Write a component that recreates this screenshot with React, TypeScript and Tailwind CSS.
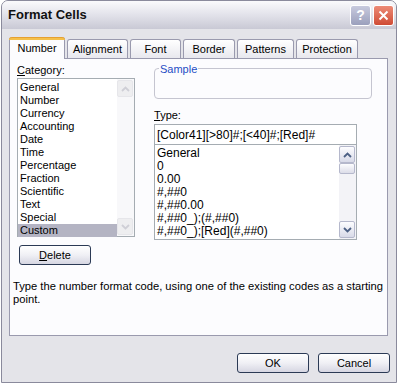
import React from "react";

const F = { fontFamily: '"Liberation Sans", Arial, sans-serif' };

function Tab({ label, w, selected }: { label: string; w: number; selected?: boolean }) {
  if (selected) {
    return (
      <div
        className="relative z-10 -mb-[1px] flex h-[22px] items-center justify-center rounded-t-[3px] border-x border-[#9a9aae] bg-[#fcfcfe] text-[11px] text-black"
        style={{ width: w }}
      >
        <div className="absolute -left-[1px] -right-[1px] top-0 h-[3px] rounded-t-[3px] bg-[#f5c04a] border-t border-[#e6a030]" />
        <span className="mt-[1px]">{label}</span>
      </div>
    );
  }
  return (
    <div
      className="flex h-[19px] items-center justify-center rounded-t-[3px] border-x border-t border-[#9a9aae] bg-gradient-to-b from-[#ffffff] to-[#e8e8ee] text-[11px] text-black"
      style={{ width: w }}
    >
      {label}
    </div>
  );
}

function Arrow({ up, color }: { up?: boolean; color: string }) {
  return (
    <svg width="9" height="6" viewBox="0 0 9 6">
      <path
        d={up ? "M1 5 L4.5 1.5 L8 5" : "M1 1 L4.5 4.5 L8 1"}
        fill="none"
        stroke={color}
        strokeWidth="1.8"
      />
    </svg>
  );
}

function ScrollBtn({ up, disabled }: { up?: boolean; disabled?: boolean }) {
  return (
    <div
      className={
        "flex h-[17px] w-[16px] items-center justify-center rounded-[2px] border " +
        (disabled
          ? "border-[#e6e6ea] bg-[#eeeef0]"
          : "border-[#b5b8cc] bg-gradient-to-b from-[#fdfdff] to-[#d8dae8]")
      }
    >
      <Arrow up={up} color={disabled ? "#cfcfd6" : "#4d6185"} />
    </div>
  );
}

export default function App() {
  const cats = [
    "General",
    "Number",
    "Currency",
    "Accounting",
    "Date",
    "Time",
    "Percentage",
    "Fraction",
    "Scientific",
    "Text",
    "Special",
    "Custom",
  ];
  const codes = [
    "General",
    "0",
    "0.00",
    "#,##0",
    "#,##0.00",
    "#,##0_);(#,##0)",
    "#,##0_);[Red](#,##0)",
  ];
  return (
    <div className="h-[385px] w-[399px] bg-white" style={F}>
      <div className="flex h-[383px] w-[396px] flex-col overflow-hidden rounded-t-[7px] border border-[#8a8a9c] bg-[#e4e4e9] ml-[1px]">
        {/* title bar */}
        <div className="flex h-[28px] shrink-0 items-center bg-gradient-to-b from-[#fafafc] via-[#e2e2ea] to-[#c9c9d5] pl-[6px] pr-[2px]">
          <span className="text-[13px] font-bold text-[#111]">Format Cells</span>
          <div className="ml-auto flex gap-[2px]">
            <div className="flex h-[21px] w-[21px] items-center justify-center rounded-[3px] border border-white bg-gradient-to-b from-[#c8cade] to-[#9ba0bc] text-[14px] font-bold text-white">
              ?
            </div>
            <div className="flex h-[21px] w-[21px] items-center justify-center rounded-[3px] border border-white bg-gradient-to-b from-[#ec8a76] to-[#cf4a34]">
              <svg width="11" height="11" viewBox="0 0 11 11">
                <path d="M1.5 1.5 L9.5 9.5 M9.5 1.5 L1.5 9.5" stroke="white" strokeWidth="2" />
              </svg>
            </div>
          </div>
        </div>

        {/* tabs */}
        <div className="ml-[7px] mt-[8px] flex items-end gap-[2px]">
          <Tab label="Number" w={56} selected />
          <Tab label="Alignment" w={61} />
          <Tab label="Font" w={51} />
          <Tab label="Border" w={52} />
          <Tab label="Patterns" w={57} />
          <Tab label="Protection" w={62} />
        </div>

        {/* panel */}
        <div className="ml-[7px] flex h-[278px] w-[379px] flex-col border border-[#9a9aae] bg-[#fcfcfe] text-[11px] text-black">
          <div className="flex">
            {/* left column */}
            <div className="ml-[7px] flex w-[118px] flex-col">
              <div className="mt-[4px] h-[14px] leading-[14px]">
                <span className="underline">C</span>ategory:
              </div>
              <div className="mt-[1px] flex h-[159px] border border-[#a5acb2] bg-white">
                <div className="flex flex-1 flex-col pt-[2px]">
                  {cats.map((c) => (
                    <div
                      key={c}
                      className={
                        "h-[13px] pl-[2px] leading-[13px] " +
                        (c === "Custom" ? "bg-[#b4b4c3]" : "")
                      }
                    >
                      {c}
                    </div>
                  ))}
                </div>
                <div className="flex w-[17px] flex-col justify-between bg-[#f8f8fa] py-[1px] pr-[1px]">
                  <ScrollBtn up disabled />
                  <ScrollBtn disabled />
                </div>
              </div>
              <div className="ml-[2px] mt-[8px] flex h-[20px] w-[72px] items-center justify-center rounded-[3px] border border-[#2b3a55] bg-gradient-to-b from-[#ffffff] via-[#f0f0f5] to-[#d6d6e2]">
                <span className="underline">D</span>elete
              </div>
            </div>

            {/* right column */}
            <div className="ml-[19px] flex flex-col">
              <div className="relative mt-[9px] h-[31px] w-[218px] rounded-[4px] border border-[#c5c5d0]">
                <span className="absolute -top-[8px] left-[4px] bg-[#fcfcfe] px-[1px] text-[#1f4ec5]">
                  Sample
                </span>
              </div>
              <div className="mt-[9px] h-[14px] leading-[14px]">
                <span className="underline">T</span>ype:
              </div>
              <div className="mt-[2px] flex h-[21px] w-[203px] items-center border border-[#a5acb2] bg-white pl-[2px] text-[12px]">
                [Color41][&gt;80]#;[&lt;40]#;[Red]#
              </div>
              <div className="flex h-[95px] w-[203px] border border-t-0 border-[#a5acb2] bg-white">
                <div className="flex flex-1 flex-col pt-[2px] text-[12px]">
                  {codes.map((c) => (
                    <div key={c} className="h-[13px] pl-[2px] leading-[13px]">
                      {c}
                    </div>
                  ))}
                </div>
                <div className="flex w-[17px] flex-col bg-[#f3f3f7] py-[1px] pr-[1px]">
                  <ScrollBtn up />
                  <div className="h-[11px] w-[16px] rounded-[2px] border border-[#b5b8cc] bg-gradient-to-b from-[#fdfdff] to-[#dcdde8]" />
                  <div className="flex-1" />
                  <ScrollBtn />
                </div>
              </div>
            </div>
          </div>

          <div className="ml-[3px] mt-[15px] w-[376px] text-[11.2px] leading-[13px]">
            Type the number format code, using one of the existing codes as a starting point.
          </div>
        </div>

        {/* buttons */}
        <div className="mt-[17px] flex justify-end gap-[9px] pr-[6px] text-[11px]">
          <div className="flex h-[20px] w-[72px] items-center justify-center rounded-[3px] border border-[#2b3a55] bg-gradient-to-b from-[#ffffff] via-[#f0f0f5] to-[#d6d6e2]">
            OK
          </div>
          <div className="flex h-[20px] w-[72px] items-center justify-center rounded-[3px] border border-[#2b3a55] bg-gradient-to-b from-[#ffffff] via-[#f0f0f5] to-[#d6d6e2]">
            Cancel
          </div>
        </div>
      </div>
    </div>
  );
}
